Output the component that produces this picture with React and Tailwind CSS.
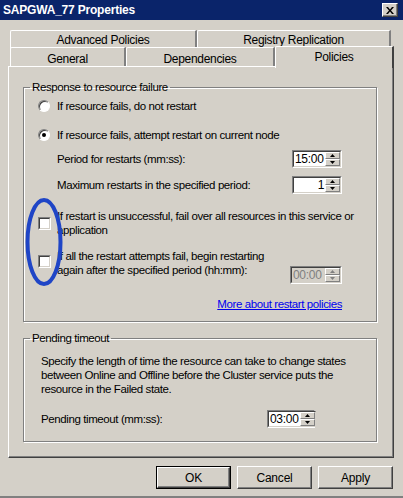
import React from "react";

function Tri({ up, disabled }) {
  return (
    <svg width="5" height="3" viewBox="0 0 5 3">
      {up ? (
        <polygon points="2.5,0 5,3 0,3" fill={disabled ? "#808080" : "#000"} />
      ) : (
        <polygon points="0,0 5,0 2.5,3" fill={disabled ? "#808080" : "#000"} />
      )}
    </svg>
  );
}

function SpinBtn({ up, disabled }) {
  return (
    <div className="h-[7px] w-full flex items-center justify-center bg-[#d4d0c8] border border-t-white border-l-white border-b-[#808080] border-r-[#808080]">
      <Tri up={up} disabled={disabled} />
    </div>
  );
}

function Spin({ value, w, right, disabled }) {
  return (
    <div className={"flex h-[18px] border border-t-[#808080] border-l-[#808080] border-b-white border-r-white " + w}>
      <div className={"flex-1 flex border border-t-[#404040] border-l-[#404040] border-b-[#d4d0c8] border-r-[#d4d0c8] " + (disabled ? "bg-[#d4d0c8]" : "bg-white")}>
        <div className={"flex-1 px-[1px] leading-[14px] text-[12px] tracking-[-0.3px] " + (right ? "text-right " : "") + (disabled ? "text-[#808080]" : "text-black")}>
          {value}
        </div>
        <div className="w-[15px] flex flex-col">
          <SpinBtn up disabled={disabled} />
          <SpinBtn disabled={disabled} />
        </div>
      </div>
    </div>
  );
}

function Radio({ checked }) {
  return (
    <div className="w-[12px] h-[12px] rounded-full bg-white border border-t-[#808080] border-l-[#808080] border-b-white border-r-white shadow-[inset_1px_1px_0_#404040] flex items-center justify-center shrink-0">
      {checked && <div className="w-[4px] h-[4px] rounded-full bg-black" />}
    </div>
  );
}

function Check() {
  return (
    <div className="w-[13px] h-[13px] shrink-0 border border-t-[#808080] border-l-[#808080] border-b-white border-r-white">
      <div className="w-full h-full bg-white border border-t-[#404040] border-l-[#404040] border-b-[#d4d0c8] border-r-[#d4d0c8]" />
    </div>
  );
}

function Btn({ label, def }) {
  return (
    <div className={"w-[75px] h-[23px] " + (def ? "border border-black" : "")}>
      <div className="w-full h-full bg-[#d4d0c8] border border-t-white border-l-white border-b-[#404040] border-r-[#404040] shadow-[inset_-1px_-1px_0_#808080] flex items-center justify-center text-[12px] text-black">
        {label}
      </div>
    </div>
  );
}

export default function App() {
  return (
    <div className="w-[403px] h-[498px] bg-[#d4d0c8] flex flex-col relative overflow-hidden font-['Liberation_Sans',Arial,sans-serif] text-[11.5px] tracking-[-0.4px] text-black">
      {/* Title bar */}
      <div className="h-[20px] w-full bg-[#0a246a] flex items-center shrink-0">
        <span className="pl-[3px] text-white font-bold text-[12px] tracking-[-0.2px]">SAPGWA_77 Properties</span>
        <div className="ml-auto mr-[5px] w-[16px] h-[14px] bg-[#d4d0c8] border border-t-white border-l-white border-b-[#404040] border-r-[#404040] shadow-[inset_-1px_-1px_0_#808080] flex items-center justify-center">
          <svg width="8" height="7" viewBox="0 0 8 7">
            <path d="M0 0 L2 0 L4 2.5 L6 0 L8 0 L5 3.5 L8 7 L6 7 L4 4.5 L2 7 L0 7 L3 3.5 Z" fill="#000" />
          </svg>
        </div>
      </div>

      {/* Tabs row 1 */}
      <div className="mt-[10px] ml-[10px] flex h-[17px] shrink-0 text-[12px] tracking-[-0.3px]">
        <div className="w-[187px] h-[19px] bg-[#d4d0c8] border-t border-l border-white border-r-2 border-r-[#808080] rounded-tl-[2px] flex justify-center pt-[3px] leading-[13px]">
          Advanced Policies
        </div>
        <div className="w-[194px] h-[19px] bg-[#d4d0c8] border-t border-l border-white border-r-2 border-r-[#808080] rounded-tl-[2px] flex justify-center pt-[3px] leading-[13px]">
          Registry Replication
        </div>
      </div>

      {/* Tabs row 2 */}
      <div className="ml-[10px] flex items-end h-[19px] shrink-0 text-[12px] tracking-[-0.3px]">
        <div className="w-[116px] h-[19px] bg-[#d4d0c8] border-t border-l border-white border-r-2 border-r-[#808080] rounded-tl-[2px] flex justify-center pt-[5px] leading-[13px] relative">
          General
        </div>
        <div className="w-[149px] h-[19px] bg-[#d4d0c8] border-t border-l border-white border-r-2 border-r-[#808080] rounded-tl-[2px] flex justify-center pt-[5px] leading-[13px] relative">
          Dependencies
        </div>
        <div className="w-[119px] h-[22px] -mb-[2px] bg-[#d4d0c8] border-t border-l border-white border-r-2 border-r-[#404040] rounded-tl-[2px] flex justify-center pt-[4px] leading-[13px] relative z-10">
          Policies
        </div>
      </div>

      {/* Panel */}
      <div className="ml-[8px] w-[386px] h-[392px] shrink-0 border-t border-l border-white border-r border-b border-r-[#404040] border-b-[#404040] shadow-[inset_-1px_-1px_0_#808080] pl-[14px] pt-[13px]">
        <fieldset className="w-[354px] h-[242px] border border-[#808080] shadow-[inset_1px_1px_0_#fff,1px_1px_0_#fff]">
          <legend className="ml-[6px] px-[2px] leading-[14px]">Response to resource failure</legend>
          <div className="ml-[14px] w-[304px] flex flex-col">
            <div className="mt-[5px] flex items-center h-[14px] gap-[7px]">
              <Radio />
              <span className="leading-[14px]">If resource fails, do not restart</span>
            </div>
            <div className="mt-[15px] flex items-center h-[14px] gap-[7px]">
              <Radio checked />
              <span className="leading-[14px]">If resource fails, attempt restart on current node</span>
            </div>
            <div className="mt-[8px] flex items-center h-[18px] pl-[19px]">
              <span className="leading-[14px]">Period for restarts (mm:ss):</span>
              <div className="ml-auto">
                <Spin value="15:00" w="w-[50px]" />
              </div>
            </div>
            <div className="mt-[8px] flex items-center h-[18px] pl-[19px]">
              <span className="leading-[14px]">Maximum restarts in the specified period:</span>
              <div className="ml-auto">
                <Spin value="1" w="w-[50px]" right />
              </div>
            </div>
            <div className="mt-[15px] flex items-center gap-[6px] w-[340px]">
              <Check />
              <span className="leading-[14px]">
                If restart is unsuccessful, fail over all resources in this service or
                <br />
                application
              </span>
            </div>
            <div className="mt-[12px] flex items-start h-[35px] gap-[6px]">
              <div className="mt-[6px]">
                <Check />
              </div>
              <span className="leading-[14px]">
                If all the restart attempts fail, begin restarting
                <br />
                again after the specified period (hh:mm):
              </span>
              <div className="ml-auto mt-[17px]">
                <Spin value="00:00" w="w-[52px]" disabled />
              </div>
            </div>
            <div className="mt-[13px] flex justify-end h-[14px]">
              <span className="leading-[14px] text-[#0000ee] underline">More about restart policies</span>
            </div>
          </div>
        </fieldset>

        <fieldset className="mt-[9px] w-[354px] h-[111px] border border-[#808080] shadow-[inset_1px_1px_0_#fff,1px_1px_0_#fff]">
          <legend className="ml-[6px] px-[2px] leading-[14px]">Pending timeout</legend>
          <div className="ml-[17px] flex flex-col">
            <div className="mt-[9px] leading-[14px]">
              Specify the length of time the resource can take to change states
              <br />
              between Online and Offline before the Cluster service puts the
              <br />
              resource in the Failed state.
            </div>
            <div className="mt-[14px] flex items-center h-[18px]">
              <span className="w-[226px] leading-[14px]">Pending timeout (mm:ss):</span>
              <Spin value="03:00" w="w-[48px]" />
            </div>
          </div>
        </fieldset>
      </div>

      {/* Buttons */}
      <div className="mt-[8px] flex justify-end gap-[6px] pr-[10px] shrink-0 tracking-[-0.2px]">
        <Btn label="OK" def />
        <Btn label="Cancel" />
        <Btn label="Apply" />
      </div>

      <div className="mt-auto h-[2px] bg-[#808080] shrink-0" />

      {/* Hand-drawn highlight ellipse */}
      <svg className="absolute left-[22px] top-[196px] pointer-events-none" width="46" height="94" viewBox="0 0 46 94">
        <ellipse cx="22" cy="46" rx="16.5" ry="42" fill="none" stroke="#1f45c6" strokeWidth="4" />
      </svg>
    </div>
  );
}
